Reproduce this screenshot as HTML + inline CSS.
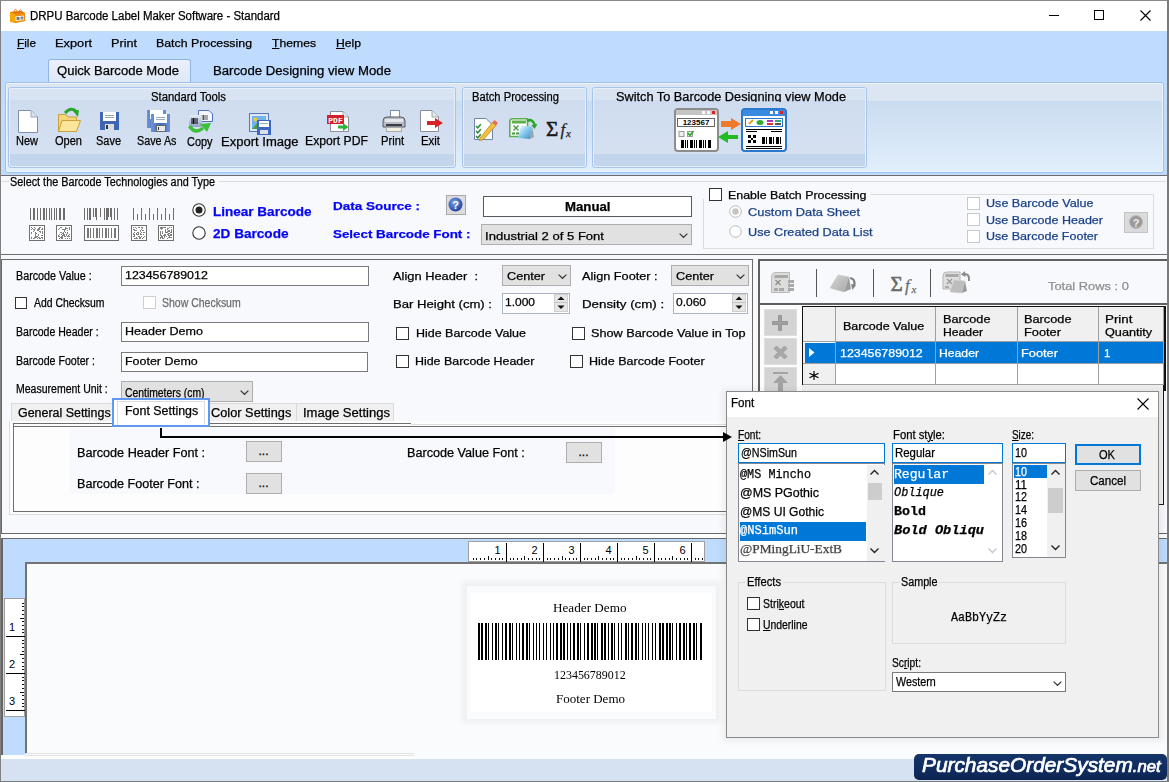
<!DOCTYPE html>
<html><head><meta charset="utf-8">
<style>
*{box-sizing:border-box;margin:0;padding:0}
html,body{width:1169px;height:782px;overflow:hidden;background:#fff;font-family:"Liberation Sans",sans-serif;font-size:12px;color:#000;position:relative}
.a{position:absolute}
.t{position:absolute;white-space:nowrap;line-height:1;-webkit-text-stroke:0.25px currentColor}
svg.a{overflow:visible}
</style></head><body>
<div class="a" style="left:0px;top:0px;width:1169px;height:782px;background:#f8f9fc;"></div>
<div class="a" style="left:0px;top:0px;width:1169px;height:31px;background:#ffffff;"></div>
<svg class="a" style="left:9px;top:7px;" width="17" height="17" viewBox="0 0 17 17"><path d="M1 5 L12 4 L16 6 L16 14 L6 16 L1 15 Z" fill="#f7a800"/><path d="M1 5 L12 4 L16 6 L6 7 Z" fill="#e07010"/><path d="M6 7 L16 6 L16 14 L6 16 Z" fill="#f28a10"/><path d="M6.5 9.5 L15 8.5 L15 13 L6.5 14 Z" fill="#fff"/><rect x="7.5" y="10" width="3" height="3" fill="#777"/><rect x="11.5" y="9.5" width="3" height="3" fill="#888"/><path d="M5 5 Q6 0 8 4 M10 4 Q12 1 13 5" stroke="#f08030" fill="none" stroke-width="1"/></svg>
<div class="t" style="left:30.0px;top:9.6px;font-size:12px;transform:scaleX(0.9561);transform-origin:0 0;">DRPU Barcode Label Maker Software - Standard</div>
<div class="a" style="left:1049px;top:15px;width:10px;height:1px;background:#000;"></div>
<div class="a" style="left:1094px;top:10px;width:10px;height:10px;border:1px solid #000;"></div>
<svg class="a" style="left:1140px;top:10px;" width="11" height="11" viewBox="0 0 11 11"><path d="M0.5 0.5 L10.5 10.5 M10.5 0.5 L0.5 10.5" stroke="#000" stroke-width="1.1"/></svg>
<div class="a" style="left:0px;top:31px;width:1169px;height:144px;background:#bfdbfd;"></div>
<div class="t" style="left:17.0px;top:37.5px;font-size:11px;color:#000;transform:scaleX(1.0704);transform-origin:0 0;"><u>F</u>ile</div>
<div class="t" style="left:55.0px;top:37.5px;font-size:11px;color:#000;transform:scaleX(1.1636);transform-origin:0 0;">Export</div>
<div class="t" style="left:111.0px;top:37.5px;font-size:11px;color:#000;transform:scaleX(1.1492);transform-origin:0 0;">Print</div>
<div class="t" style="left:156.0px;top:37.5px;font-size:11px;color:#000;transform:scaleX(1.1214);transform-origin:0 0;">Batch Processing</div>
<div class="t" style="left:272.0px;top:37.5px;font-size:11px;color:#000;transform:scaleX(1.1065);transform-origin:0 0;"><u>T</u>hemes</div>
<div class="t" style="left:336.0px;top:37.5px;font-size:11px;color:#000;transform:scaleX(1.1042);transform-origin:0 0;"><u>H</u>elp</div>
<div class="a" style="left:48px;top:59px;width:143px;height:23px;background:linear-gradient(#eceffb,#e4ecf8 50%,#dfe8f6);border:1px solid #8fb4e8;border-bottom:none;border-radius:3px 3px 0 0;"></div>
<div class="t" style="left:56.5px;top:64.6px;font-size:12px;transform:scaleX(1.0887);transform-origin:0 0;">Quick Barcode Mode</div>
<div class="t" style="left:213.0px;top:64.6px;font-size:12px;transform:scaleX(1.0981);transform-origin:0 0;">Barcode Designing view Mode</div>
<div class="a" style="left:5px;top:82px;width:1159px;height:91px;background:linear-gradient(#dce6f2 0,#dce6f2 18px,#cadcf0 18px,#e2effc 100%);border:1px solid #9fc0ea;border-radius:3px;"></div>
<div class="a" style="left:6px;top:83px;width:1157px;height:89px;border:1px solid #eef4fb;border-radius:2px;"></div>
<div class="a" style="left:8px;top:87px;width:448px;height:81px;background:linear-gradient(#d9e4f3 0,#d9e4f3 12px,#cfdcef 12px,#d5e1f1 66px,#c3d5ed 66px,#c3d5ed 100%);border:1px solid #a7c4ea;border-radius:3px;"></div>
<div class="a" style="left:9px;top:88px;width:446px;height:79px;border:1px solid #e6eef8;border-radius:2px;"></div>
<div class="t" style="left:151.0px;top:90.8px;font-size:12px;transform:scaleX(0.9393);transform-origin:0 0;">Standard Tools</div>
<div class="a" style="left:462px;top:87px;width:125px;height:81px;background:linear-gradient(#d9e4f3 0,#d9e4f3 12px,#cfdcef 12px,#d5e1f1 66px,#c3d5ed 66px,#c3d5ed 100%);border:1px solid #a7c4ea;border-radius:3px;"></div>
<div class="a" style="left:463px;top:88px;width:123px;height:79px;border:1px solid #e6eef8;border-radius:2px;"></div>
<div class="t" style="left:472.0px;top:90.8px;font-size:12px;transform:scaleX(0.9316);transform-origin:0 0;">Batch Processing</div>
<div class="a" style="left:592px;top:87px;width:275px;height:81px;background:linear-gradient(#d9e4f3 0,#d9e4f3 12px,#cfdcef 12px,#d5e1f1 66px,#c3d5ed 66px,#c3d5ed 100%);border:1px solid #a7c4ea;border-radius:3px;"></div>
<div class="a" style="left:593px;top:88px;width:273px;height:79px;border:1px solid #e6eef8;border-radius:2px;"></div>
<div class="t" style="left:616.0px;top:90.8px;font-size:12px;transform:scaleX(1.0620);transform-origin:0 0;"><span style="display:block;height:11px;overflow:hidden">Switch To Barcode Designing view Mode</span></div>
<svg class="a" style="left:18px;top:110px;" width="20" height="23" viewBox="0 0 20 23"><path d="M0.5 0.5 H13 L19.5 7 V22.5 H0.5 Z" fill="#fff" stroke="#7f8fb0"/><path d="M13 0.5 V7 H19.5" fill="#dde3ee" stroke="#9aa6c0"/></svg>
<div class="t" style="left:16.0px;top:134.5px;font-size:12px;transform:scaleX(0.9161);transform-origin:0 0;">New</div>
<svg class="a" style="left:58px;top:108px;" width="23" height="25" viewBox="0 0 23 25"><path d="M0.5 6.5 H8 L10 9 H18.5 V23.5 H0.5 Z" fill="#f5d77a" stroke="#c9a03a"/><path d="M0.5 23.5 L4 12.5 H22.5 L18.5 23.5 Z" fill="#fbe59a" stroke="#c9a03a"/><path d="M7 5 Q13 -2 19 4" fill="none" stroke="#2aa52a" stroke-width="3"/><path d="M15 3 L21 2 L20 9 Z" fill="#2aa52a"/></svg>
<div class="t" style="left:54.5px;top:134.5px;font-size:12px;transform:scaleX(0.9196);transform-origin:0 0;">Open</div>
<svg class="a" style="left:100px;top:112px;" width="19" height="18" viewBox="0 0 19 18"><rect x="0" y="0" width="19" height="18" fill="#3f66b5"/><rect x="3" y="0" width="13" height="9" fill="#fff"/><rect x="5" y="3" width="9" height="1" fill="#9aa"/><rect x="5" y="5" width="9" height="1" fill="#9aa"/><rect x="5" y="12" width="9" height="6" fill="#ddd"/><rect x="6" y="13" width="2" height="4" fill="#333"/></svg>
<div class="t" style="left:96.0px;top:134.5px;font-size:12px;transform:scaleX(0.9138);transform-origin:0 0;">Save</div>
<svg class="a" style="left:147px;top:110px;" width="24" height="22" viewBox="0 0 24 22"><defs><linearGradient id="fg" x1="0" x2="1"><stop offset="0" stop-color="#6f95d8"/><stop offset="0.5" stop-color="#3d68bf"/><stop offset="1" stop-color="#6f95d8"/></linearGradient></defs><rect x="0" y="0" width="19" height="18" fill="url(#fg)"/><rect x="3" y="0" width="13" height="9" fill="#fff"/><rect x="4" y="4" width="19" height="18" fill="url(#fg)"/><rect x="7" y="4" width="13" height="9" fill="#fff"/><rect x="9" y="7" width="9" height="1" fill="#9ab"/><rect x="9" y="9" width="9" height="1" fill="#9ab"/><rect x="9.5" y="15.5" width="9" height="6" fill="#e8e8e8" stroke="#666"/><rect x="11" y="17" width="1" height="3" fill="#333"/></svg>
<div class="t" style="left:136.5px;top:134.5px;font-size:12px;transform:scaleX(0.8971);transform-origin:0 0;">Save As</div>
<svg class="a" style="left:188px;top:109px;" width="26" height="25" viewBox="0 0 26 25"><defs><linearGradient id="cg" x1="0" y1="0" x2="0" y2="1"><stop offset="0" stop-color="#e8eef8"/><stop offset="1" stop-color="#8fa3c4"/></linearGradient></defs><path d="M10.5 1.5 H21 L24.5 5 V12.5 H10.5 Z" fill="#f4f8fd" stroke="#4f70c0"/><path d="M14 6 v5 M15.5 6 v5 M17 6 v5 M19 6 v5" stroke="#555"/><rect x="1" y="6" width="13" height="12" rx="2" fill="url(#cg)"/><path d="M4 9 v6 M5.5 9 v6 M7 9 v6 M9 9 v6" stroke="#111" stroke-width="1.1"/><path d="M1.5 17 Q7 26 15 19" fill="none" stroke="#3cc03c" stroke-width="3.5"/><path d="M12 15 L23 14 L19 23 Z" fill="#3cc03c"/></svg>
<div class="t" style="left:187.0px;top:135.8px;font-size:12px;transform:scaleX(0.9102);transform-origin:0 0;">Copy</div>
<svg class="a" style="left:249px;top:113px;" width="23" height="22" viewBox="0 0 23 22"><rect x="0.5" y="0.5" width="19" height="18" fill="#dde6f3" stroke="#5a78b0"/><rect x="3" y="3" width="14" height="13" fill="#6fb4ea"/><circle cx="6.5" cy="6.5" r="2" fill="#f5c542"/><path d="M3 16 L8 10 L11 13 L14 9 L17 13 V16Z" fill="#4aa04a"/><rect x="8" y="7" width="14" height="15" fill="#3d68bf"/><rect x="10" y="8" width="10" height="6" fill="#fff"/><rect x="11" y="10" width="8" height="1" fill="#9ab"/><rect x="11" y="17" width="8" height="4" fill="#dde"/></svg>
<div class="t" style="left:221.0px;top:135.8px;font-size:12px;transform:scaleX(1.0858);transform-origin:0 0;">Export Image</div>
<svg class="a" style="left:326px;top:110px;" width="24" height="23" viewBox="0 0 24 23"><path d="M4.5 1.5 H17 L22.5 7 V21.5 H4.5 Z" fill="#fff" stroke="#8a8f99"/><path d="M17 1.5 V7 H22.5" fill="#e4e6ea" stroke="#9aa"/><rect x="1" y="5" width="17" height="9" fill="#d3202a"/><text x="9.5" y="12.8" font-size="8" font-weight="bold" fill="#fff" text-anchor="middle" font-family="Liberation Mono">PDF</text><path d="M12 15.5 H17 V13 L22.5 17 L17 21 V18.5 H12 Z" fill="#2bb53a"/></svg>
<div class="t" style="left:305.0px;top:135.3px;font-size:12px;transform:scaleX(1.0159);transform-origin:0 0;">Export PDF</div>
<svg class="a" style="left:382px;top:110px;" width="24" height="22" viewBox="0 0 24 22"><rect x="8.5" y="0.5" width="9" height="9" fill="#fff" stroke="#7f8fb0"/><path d="M1 11 Q1 7 5 7 H19 Q23 7 23 11 V17 H1 Z" fill="#b8bcc4" stroke="#555a63"/><rect x="3" y="9" width="18" height="3" fill="#e4e7ec"/><rect x="4" y="14" width="16" height="2" fill="#3a3d44"/><rect x="4.5" y="17.5" width="15" height="4" fill="#f2f0e0" stroke="#aaa"/></svg>
<div class="t" style="left:381.0px;top:135.3px;font-size:12px;transform:scaleX(0.9316);transform-origin:0 0;">Print</div>
<svg class="a" style="left:420px;top:110px;" width="24" height="22" viewBox="0 0 24 22"><path d="M0.5 0.5 H12 L18.5 7 V21.5 H0.5 Z" fill="#fff" stroke="#8a8f99"/><path d="M12 0.5 V7 H18.5" fill="#e4e6ea" stroke="#9aa"/><path d="M7 11 H15 V8 L23 13 L15 18 V15 H7 Z" fill="#d8232a"/></svg>
<div class="t" style="left:420.8px;top:135.3px;font-size:12px;transform:scaleX(0.9493);transform-origin:0 0;">Exit</div>
<svg class="a" style="left:474px;top:118px;" width="24" height="23" viewBox="0 0 24 23"><path d="M0.5 0.5 H12 L18.5 7 V21.5 H0.5 Z" fill="#fff" stroke="#7284aa"/><path d="M2 8 l1.8 1.8 l3 -3.5 M2 13 l1.8 1.8 l3 -3.5 M2 18 l1.8 1.8 l3 -3.5" stroke="#2e8a2e" stroke-width="1.5" fill="none"/><path d="M6 20 L18.5 4.5 L22 7.5 L9.5 21.5 L5.5 22.5 Z" fill="#f2c040" stroke="#b07a18" stroke-width="0.7"/><path d="M18.5 4.5 L20.5 2 L24 5 L22 7.5Z" fill="#e86a5a"/></svg>
<svg class="a" style="left:509px;top:118px;" width="29" height="23" viewBox="0 0 29 23"><defs><linearGradient id="bn" x1="0" y1="0" x2="1" y2="1"><stop offset="0" stop-color="#ffffff"/><stop offset="0.45" stop-color="#8fd0f0"/><stop offset="1" stop-color="#3a8ac0"/></linearGradient></defs><path d="M0.8 4 Q0.8 0.8 4 0.8 H18.5 V18.5 H0.8 Z" fill="#fff" stroke="#5cb04c" stroke-width="1.6"/><rect x="3" y="2.5" width="14" height="3" fill="#5cb04c"/><path d="M4.5 7.5 l5 5 M9.5 7.5 l-5 5" stroke="#3f9a3f" stroke-width="1.3"/><rect x="3" y="14.5" width="3" height="2" fill="#3f9a3f"/><rect x="7" y="14.5" width="3" height="2" fill="#3f9a3f"/><path d="M9 20 L12 7.5 L23 8.5 L21 21 Z" fill="url(#bn)"/><path d="M21 21 L23 8.5 L25 19 Z" fill="#9aa4ac"/><path d="M18 3 Q24 0 26 8" fill="none" stroke="#2aa52a" stroke-width="2.6"/><path d="M22.5 7 L28.5 6 L25.5 11 Z" fill="#2aa52a"/></svg>
<div class="t" style="left:546.0px;top:119.2px;font-size:21px;color:#1a1a1a;font-family:'Liberation Serif',serif;-webkit-text-stroke:0.6px #1a1a1a;">&Sigma;</div>
<div class="t" style="left:560.5px;top:121.4px;font-size:17px;color:#1a1a1a;font-family:'Liberation Serif',serif;"><i>f</i></div>
<div class="t" style="left:566.0px;top:128.3px;font-size:11px;color:#1a1a1a;font-family:'Liberation Serif',serif;"><i>x</i></div>
<svg class="a" style="left:674px;top:108px;" width="45" height="44" viewBox="0 0 45 44"><rect x="1" y="1" width="43" height="42" rx="3" fill="#fff" stroke="#8c8c8c" stroke-width="2"/><rect x="2" y="2" width="41" height="5" fill="#c4c4c4"/><rect x="28" y="3" width="3" height="3" fill="#fff"/><rect x="33" y="3" width="3" height="3" fill="#fff"/><rect x="38" y="3" width="3" height="3" fill="#d22"/><rect x="3.5" y="10.5" width="37" height="8" fill="#fff" stroke="#666"/><text x="22" y="17.3" font-size="8" font-weight="bold" text-anchor="middle" font-family="Liberation Sans">123567</text><rect x="5" y="23.5" width="5" height="5" fill="#eee" stroke="#999"/><rect x="13.5" y="23.5" width="5" height="5" fill="#eee" stroke="#999"/><path d="M14 25 l2 2.5 l3.5 -4.5" stroke="#2a2" stroke-width="1.5" fill="none"/><rect x="7" y="32" width="2" height="8" fill="#000"/><rect x="9" y="32" width="1" height="8" fill="#000"/><rect x="11" y="32" width="1" height="8" fill="#000"/><rect x="13" y="32" width="1" height="8" fill="#000"/><rect x="16" y="32" width="2" height="8" fill="#000"/><rect x="18" y="32" width="1" height="8" fill="#000"/><rect x="20" y="32" width="1" height="8" fill="#000"/><rect x="22" y="32" width="1" height="8" fill="#000"/><rect x="25" y="32" width="2" height="8" fill="#000"/><rect x="27" y="32" width="1" height="8" fill="#000"/><rect x="29" y="32" width="1" height="8" fill="#000"/><rect x="31" y="32" width="1" height="8" fill="#000"/><rect x="34" y="32" width="2" height="8" fill="#000"/><rect x="36" y="32" width="1" height="8" fill="#000"/></svg>
<svg class="a" style="left:718px;top:118px;" width="24" height="26" viewBox="0 0 24 26"><path d="M3 3 H13 V0 L23 6 L13 12 V9 H3 Z" fill="#ee7a2a"/><path d="M20 17 H10 V13 L0 19 L10 25 V21 H20 Z" fill="#22bb22"/></svg>
<svg class="a" style="left:741px;top:108px;" width="46" height="44" viewBox="0 0 46 44"><rect x="1" y="1" width="44" height="42" rx="3" fill="#fff" stroke="#2a78d0" stroke-width="2"/><rect x="2" y="2" width="42" height="6" fill="#3a8ae0"/><rect x="29" y="3" width="3" height="3" fill="#fff"/><rect x="34" y="3" width="3" height="3" fill="#fff"/><rect x="39" y="3" width="3" height="3" fill="#d22"/><rect x="4.5" y="10.5" width="37" height="8" fill="#fff" stroke="#2a78d0"/><path d="M8 16 l4 -4" stroke="#e0a020" stroke-width="2"/><ellipse cx="19" cy="14.5" rx="3.5" ry="2.5" fill="#3a3"/><rect x="26" y="12" width="6" height="2" fill="#a3c"/><rect x="26" y="15" width="6" height="2" fill="#d33"/><rect x="34" y="12" width="6" height="2" fill="#3a7"/><rect x="34" y="15" width="6" height="2" fill="#555"/><rect x="5" y="21" width="36" height="1" fill="#000"/><rect x="5" y="23" width="11" height="1" fill="#000"/><rect x="30" y="23" width="11" height="1" fill="#000"/><rect x="7" y="27" width="3" height="3" fill="#000"/><rect x="12" y="27" width="3" height="3" fill="#000"/><rect x="7" y="32" width="3" height="3" fill="#000"/><rect x="12" y="32" width="3" height="3" fill="#000"/><rect x="10" y="30" width="2" height="2" fill="#000"/><rect x="21" y="29" width="2" height="7" fill="#000"/><rect x="23" y="29" width="1" height="7" fill="#000"/><rect x="25" y="29" width="1" height="7" fill="#000"/><rect x="28" y="29" width="2" height="7" fill="#000"/><rect x="30" y="29" width="1" height="7" fill="#000"/><rect x="32" y="29" width="1" height="7" fill="#000"/><rect x="35" y="29" width="2" height="7" fill="#000"/><rect x="37" y="29" width="1" height="7" fill="#000"/><rect x="39" y="29" width="1" height="7" fill="#000"/><rect x="5" y="38" width="36" height="1" fill="#000"/><rect x="5" y="40" width="36" height="1" fill="#000"/></svg>
<div class="a" style="left:0px;top:175px;width:1169px;height:1px;background:#6d6d6d;"></div>
<div class="a" style="left:0px;top:254px;width:1169px;height:1px;background:#6d6d6d;"></div>
<div class="a" style="left:2px;top:181px;width:1164px;height:1px;background:#dcdcdc;"></div>
<div class="a" style="left:9px;top:176px;width:210px;height:11px;background:#f8f9fc;"></div>
<div class="t" style="left:10.0px;top:176.0px;font-size:12px;transform:scaleX(0.9028);transform-origin:0 0;">Select the Barcode Technologies and Type</div>
<svg class="a" style="left:30px;top:208px;" width="37" height="12" viewBox="0 0 37 12"><rect x="0" y="0" width="1" height="12" fill="#6d6d6d"/><rect x="3" y="0" width="2" height="12" fill="#6d6d6d"/><rect x="7" y="0" width="1" height="12" fill="#6d6d6d"/><rect x="10" y="0" width="1" height="12" fill="#6d6d6d"/><rect x="13" y="0" width="2" height="12" fill="#6d6d6d"/><rect x="16" y="0" width="1" height="12" fill="#6d6d6d"/><rect x="19" y="0" width="1" height="12" fill="#6d6d6d"/><rect x="21" y="0" width="1" height="12" fill="#6d6d6d"/><rect x="24" y="0" width="1" height="12" fill="#6d6d6d"/><rect x="26" y="0" width="1" height="12" fill="#6d6d6d"/><rect x="29" y="0" width="2" height="12" fill="#6d6d6d"/><rect x="33" y="0" width="2" height="12" fill="#6d6d6d"/></svg>
<svg class="a" style="left:84px;top:208px;" width="34" height="12" viewBox="0 0 34 12"><path d="M0.5 0v12M3.5 0v12M6.5 0v12M9.5 0v9M12.5 0v12M16.5 0v9M20.5 0v12M24.5 0v9M27.5 0v12M30.5 0v12M33.5 0v12" stroke="#6d6d6d" stroke-width="1"/><rect x="5" y="0" width="2" height="12" fill="#6d6d6d"/><rect x="11" y="0" width="2" height="9" fill="#6d6d6d"/><rect x="22" y="0" width="2" height="12" fill="#6d6d6d"/><rect x="26" y="0" width="2" height="9" fill="#6d6d6d"/></svg>
<svg class="a" style="left:133px;top:208px;" width="42" height="12" viewBox="0 0 42 12"><rect x="0" y="0" width="1" height="12" fill="#6d6d6d"/><rect x="4" y="6" width="1" height="6" fill="#6d6d6d"/><rect x="8" y="0" width="1" height="12" fill="#6d6d6d"/><rect x="12" y="6" width="1" height="6" fill="#6d6d6d"/><rect x="16" y="0" width="1" height="12" fill="#6d6d6d"/><rect x="20" y="6" width="1" height="6" fill="#6d6d6d"/><rect x="24" y="0" width="1" height="12" fill="#6d6d6d"/><rect x="28" y="6" width="1" height="6" fill="#6d6d6d"/><rect x="32" y="0" width="1" height="12" fill="#6d6d6d"/><rect x="36" y="6" width="1" height="6" fill="#6d6d6d"/><rect x="40" y="0" width="1" height="12" fill="#6d6d6d"/></svg>
<svg class="a" style="left:29px;top:225px;" width="16" height="16" viewBox="0 0 16 16"><rect x="0.5" y="0.5" width="15" height="15" fill="#fff" stroke="#707070"/><rect x="2" y="2" width="1" height="1" fill="#808080"/><rect x="5" y="2" width="1" height="1" fill="#808080"/><rect x="10" y="2" width="1" height="1" fill="#808080"/><rect x="11" y="2" width="1" height="1" fill="#808080"/><rect x="3" y="3" width="1" height="1" fill="#808080"/><rect x="6" y="3" width="1" height="1" fill="#808080"/><rect x="9" y="3" width="1" height="1" fill="#808080"/><rect x="10" y="3" width="1" height="1" fill="#808080"/><rect x="13" y="3" width="1" height="1" fill="#808080"/><rect x="2" y="4" width="1" height="1" fill="#808080"/><rect x="4" y="4" width="1" height="1" fill="#808080"/><rect x="5" y="4" width="1" height="1" fill="#808080"/><rect x="8" y="4" width="1" height="1" fill="#808080"/><rect x="9" y="4" width="1" height="1" fill="#808080"/><rect x="10" y="4" width="1" height="1" fill="#808080"/><rect x="12" y="4" width="1" height="1" fill="#808080"/><rect x="13" y="4" width="1" height="1" fill="#808080"/><rect x="5" y="5" width="1" height="1" fill="#808080"/><rect x="8" y="5" width="1" height="1" fill="#808080"/><rect x="9" y="5" width="1" height="1" fill="#808080"/><rect x="4" y="6" width="1" height="1" fill="#808080"/><rect x="10" y="6" width="1" height="1" fill="#808080"/><rect x="11" y="6" width="1" height="1" fill="#808080"/><rect x="13" y="6" width="1" height="1" fill="#808080"/><rect x="2" y="7" width="1" height="1" fill="#808080"/><rect x="6" y="7" width="1" height="1" fill="#808080"/><rect x="11" y="7" width="1" height="1" fill="#808080"/><rect x="13" y="7" width="1" height="1" fill="#808080"/><rect x="2" y="8" width="1" height="1" fill="#808080"/><rect x="6" y="8" width="1" height="1" fill="#808080"/><rect x="7" y="8" width="1" height="1" fill="#808080"/><rect x="13" y="8" width="1" height="1" fill="#808080"/><rect x="6" y="9" width="1" height="1" fill="#808080"/><rect x="9" y="9" width="1" height="1" fill="#808080"/><rect x="6" y="10" width="1" height="1" fill="#808080"/><rect x="9" y="10" width="1" height="1" fill="#808080"/><rect x="12" y="10" width="1" height="1" fill="#808080"/><rect x="13" y="10" width="1" height="1" fill="#808080"/><rect x="6" y="11" width="1" height="1" fill="#808080"/><rect x="7" y="11" width="1" height="1" fill="#808080"/><rect x="8" y="11" width="1" height="1" fill="#808080"/><rect x="2" y="12" width="1" height="1" fill="#808080"/><rect x="5" y="12" width="1" height="1" fill="#808080"/><rect x="6" y="12" width="1" height="1" fill="#808080"/><rect x="7" y="12" width="1" height="1" fill="#808080"/><rect x="9" y="12" width="1" height="1" fill="#808080"/><rect x="10" y="12" width="1" height="1" fill="#808080"/><rect x="12" y="12" width="1" height="1" fill="#808080"/><rect x="13" y="12" width="1" height="1" fill="#808080"/><rect x="2" y="13" width="1" height="1" fill="#808080"/><rect x="4" y="13" width="1" height="1" fill="#808080"/><rect x="5" y="13" width="1" height="1" fill="#808080"/><rect x="8" y="13" width="1" height="1" fill="#808080"/><rect x="10" y="13" width="1" height="1" fill="#808080"/><rect x="11" y="13" width="1" height="1" fill="#808080"/><rect x="13" y="13" width="1" height="1" fill="#808080"/></svg>
<svg class="a" style="left:56px;top:225px;" width="16" height="16" viewBox="0 0 16 16"><rect x="0.5" y="0.5" width="15" height="15" fill="#fff" stroke="#707070"/><rect x="4" y="2" width="1" height="1" fill="#808080"/><rect x="5" y="2" width="1" height="1" fill="#808080"/><rect x="9" y="2" width="1" height="1" fill="#808080"/><rect x="13" y="2" width="1" height="1" fill="#808080"/><rect x="3" y="3" width="1" height="1" fill="#808080"/><rect x="9" y="3" width="1" height="1" fill="#808080"/><rect x="10" y="3" width="1" height="1" fill="#808080"/><rect x="11" y="3" width="1" height="1" fill="#808080"/><rect x="13" y="3" width="1" height="1" fill="#808080"/><rect x="2" y="4" width="1" height="1" fill="#808080"/><rect x="6" y="4" width="1" height="1" fill="#808080"/><rect x="7" y="4" width="1" height="1" fill="#808080"/><rect x="8" y="4" width="1" height="1" fill="#808080"/><rect x="9" y="4" width="1" height="1" fill="#808080"/><rect x="13" y="4" width="1" height="1" fill="#808080"/><rect x="8" y="5" width="1" height="1" fill="#808080"/><rect x="11" y="5" width="1" height="1" fill="#808080"/><rect x="8" y="6" width="1" height="1" fill="#808080"/><rect x="4" y="7" width="1" height="1" fill="#808080"/><rect x="5" y="7" width="1" height="1" fill="#808080"/><rect x="7" y="7" width="1" height="1" fill="#808080"/><rect x="9" y="7" width="1" height="1" fill="#808080"/><rect x="11" y="7" width="1" height="1" fill="#808080"/><rect x="6" y="8" width="1" height="1" fill="#808080"/><rect x="7" y="8" width="1" height="1" fill="#808080"/><rect x="11" y="8" width="1" height="1" fill="#808080"/><rect x="3" y="9" width="1" height="1" fill="#808080"/><rect x="5" y="9" width="1" height="1" fill="#808080"/><rect x="7" y="9" width="1" height="1" fill="#808080"/><rect x="8" y="9" width="1" height="1" fill="#808080"/><rect x="10" y="9" width="1" height="1" fill="#808080"/><rect x="13" y="9" width="1" height="1" fill="#808080"/><rect x="2" y="10" width="1" height="1" fill="#808080"/><rect x="6" y="10" width="1" height="1" fill="#808080"/><rect x="7" y="10" width="1" height="1" fill="#808080"/><rect x="8" y="10" width="1" height="1" fill="#808080"/><rect x="10" y="10" width="1" height="1" fill="#808080"/><rect x="12" y="10" width="1" height="1" fill="#808080"/><rect x="2" y="11" width="1" height="1" fill="#808080"/><rect x="3" y="11" width="1" height="1" fill="#808080"/><rect x="5" y="11" width="1" height="1" fill="#808080"/><rect x="6" y="11" width="1" height="1" fill="#808080"/><rect x="8" y="11" width="1" height="1" fill="#808080"/><rect x="9" y="11" width="1" height="1" fill="#808080"/><rect x="11" y="11" width="1" height="1" fill="#808080"/><rect x="12" y="11" width="1" height="1" fill="#808080"/><rect x="13" y="11" width="1" height="1" fill="#808080"/><rect x="4" y="12" width="1" height="1" fill="#808080"/><rect x="5" y="12" width="1" height="1" fill="#808080"/><rect x="6" y="12" width="1" height="1" fill="#808080"/><rect x="3" y="13" width="1" height="1" fill="#808080"/><rect x="5" y="13" width="1" height="1" fill="#808080"/><rect x="6" y="13" width="1" height="1" fill="#808080"/><rect x="9" y="13" width="1" height="1" fill="#808080"/><rect x="11" y="13" width="1" height="1" fill="#808080"/><rect x="13" y="13" width="1" height="1" fill="#808080"/></svg>
<svg class="a" style="left:84px;top:225px;" width="35" height="16" viewBox="0 0 35 16"><rect x="0.5" y="0.5" width="34" height="15" fill="#fff" stroke="#6d6d6d"/><rect x="3" y="3" width="2" height="10" fill="#777"/><rect x="6" y="3" width="1" height="10" fill="#777"/><rect x="9" y="3" width="1" height="10" fill="#777"/><rect x="12" y="3" width="2" height="10" fill="#777"/><rect x="15" y="3" width="1" height="10" fill="#777"/><rect x="18" y="3" width="1" height="10" fill="#777"/><rect x="21" y="3" width="2" height="10" fill="#777"/><rect x="24" y="3" width="1" height="10" fill="#777"/><rect x="27" y="3" width="1" height="10" fill="#777"/><rect x="30" y="3" width="2" height="10" fill="#777"/></svg>
<svg class="a" style="left:131px;top:225px;" width="16" height="16" viewBox="0 0 16 16"><rect x="0.5" y="0.5" width="15" height="15" fill="#fff" stroke="#707070"/><rect x="2" y="2" width="1" height="1" fill="#808080"/><rect x="4" y="2" width="1" height="1" fill="#808080"/><rect x="7" y="2" width="1" height="1" fill="#808080"/><rect x="8" y="2" width="1" height="1" fill="#808080"/><rect x="10" y="2" width="1" height="1" fill="#808080"/><rect x="11" y="2" width="1" height="1" fill="#808080"/><rect x="5" y="3" width="1" height="1" fill="#808080"/><rect x="11" y="3" width="1" height="1" fill="#808080"/><rect x="2" y="4" width="1" height="1" fill="#808080"/><rect x="3" y="4" width="1" height="1" fill="#808080"/><rect x="10" y="4" width="1" height="1" fill="#808080"/><rect x="3" y="5" width="1" height="1" fill="#808080"/><rect x="4" y="5" width="1" height="1" fill="#808080"/><rect x="5" y="5" width="1" height="1" fill="#808080"/><rect x="9" y="5" width="1" height="1" fill="#808080"/><rect x="11" y="5" width="1" height="1" fill="#808080"/><rect x="12" y="5" width="1" height="1" fill="#808080"/><rect x="9" y="6" width="1" height="1" fill="#808080"/><rect x="3" y="7" width="1" height="1" fill="#808080"/><rect x="6" y="7" width="1" height="1" fill="#808080"/><rect x="7" y="7" width="1" height="1" fill="#808080"/><rect x="10" y="7" width="1" height="1" fill="#808080"/><rect x="12" y="7" width="1" height="1" fill="#808080"/><rect x="13" y="7" width="1" height="1" fill="#808080"/><rect x="2" y="8" width="1" height="1" fill="#808080"/><rect x="5" y="8" width="1" height="1" fill="#808080"/><rect x="7" y="8" width="1" height="1" fill="#808080"/><rect x="9" y="8" width="1" height="1" fill="#808080"/><rect x="2" y="9" width="1" height="1" fill="#808080"/><rect x="3" y="9" width="1" height="1" fill="#808080"/><rect x="5" y="9" width="1" height="1" fill="#808080"/><rect x="6" y="9" width="1" height="1" fill="#808080"/><rect x="7" y="9" width="1" height="1" fill="#808080"/><rect x="9" y="9" width="1" height="1" fill="#808080"/><rect x="10" y="9" width="1" height="1" fill="#808080"/><rect x="12" y="9" width="1" height="1" fill="#808080"/><rect x="3" y="10" width="1" height="1" fill="#808080"/><rect x="2" y="11" width="1" height="1" fill="#808080"/><rect x="3" y="11" width="1" height="1" fill="#808080"/><rect x="7" y="11" width="1" height="1" fill="#808080"/><rect x="8" y="11" width="1" height="1" fill="#808080"/><rect x="10" y="11" width="1" height="1" fill="#808080"/><rect x="13" y="11" width="1" height="1" fill="#808080"/><rect x="5" y="12" width="1" height="1" fill="#808080"/><rect x="8" y="12" width="1" height="1" fill="#808080"/><rect x="9" y="12" width="1" height="1" fill="#808080"/><rect x="12" y="12" width="1" height="1" fill="#808080"/><rect x="3" y="13" width="1" height="1" fill="#808080"/><rect x="4" y="13" width="1" height="1" fill="#808080"/><rect x="5" y="13" width="1" height="1" fill="#808080"/><rect x="6" y="13" width="1" height="1" fill="#808080"/><rect x="8" y="13" width="1" height="1" fill="#808080"/><rect x="9" y="13" width="1" height="1" fill="#808080"/><rect x="11" y="13" width="1" height="1" fill="#808080"/></svg>
<svg class="a" style="left:158px;top:225px;" width="16" height="16" viewBox="0 0 16 16"><rect x="0.5" y="0.5" width="15" height="15" fill="#fff" stroke="#707070"/><rect x="2" y="2" width="1" height="1" fill="#808080"/><rect x="3" y="2" width="1" height="1" fill="#808080"/><rect x="4" y="2" width="1" height="1" fill="#808080"/><rect x="5" y="2" width="1" height="1" fill="#808080"/><rect x="6" y="2" width="1" height="1" fill="#808080"/><rect x="7" y="2" width="1" height="1" fill="#808080"/><rect x="11" y="2" width="1" height="1" fill="#808080"/><rect x="13" y="2" width="1" height="1" fill="#808080"/><rect x="2" y="3" width="1" height="1" fill="#808080"/><rect x="3" y="3" width="1" height="1" fill="#808080"/><rect x="4" y="3" width="1" height="1" fill="#808080"/><rect x="9" y="3" width="1" height="1" fill="#808080"/><rect x="10" y="3" width="1" height="1" fill="#808080"/><rect x="3" y="4" width="1" height="1" fill="#808080"/><rect x="7" y="4" width="1" height="1" fill="#808080"/><rect x="9" y="4" width="1" height="1" fill="#808080"/><rect x="13" y="4" width="1" height="1" fill="#808080"/><rect x="7" y="5" width="1" height="1" fill="#808080"/><rect x="10" y="5" width="1" height="1" fill="#808080"/><rect x="11" y="5" width="1" height="1" fill="#808080"/><rect x="13" y="5" width="1" height="1" fill="#808080"/><rect x="2" y="6" width="1" height="1" fill="#808080"/><rect x="4" y="6" width="1" height="1" fill="#808080"/><rect x="7" y="6" width="1" height="1" fill="#808080"/><rect x="9" y="6" width="1" height="1" fill="#808080"/><rect x="10" y="6" width="1" height="1" fill="#808080"/><rect x="11" y="6" width="1" height="1" fill="#808080"/><rect x="13" y="6" width="1" height="1" fill="#808080"/><rect x="2" y="7" width="1" height="1" fill="#808080"/><rect x="4" y="7" width="1" height="1" fill="#808080"/><rect x="7" y="7" width="1" height="1" fill="#808080"/><rect x="8" y="7" width="1" height="1" fill="#808080"/><rect x="9" y="7" width="1" height="1" fill="#808080"/><rect x="12" y="7" width="1" height="1" fill="#808080"/><rect x="13" y="7" width="1" height="1" fill="#808080"/><rect x="2" y="8" width="1" height="1" fill="#808080"/><rect x="4" y="8" width="1" height="1" fill="#808080"/><rect x="10" y="8" width="1" height="1" fill="#808080"/><rect x="11" y="8" width="1" height="1" fill="#808080"/><rect x="2" y="9" width="1" height="1" fill="#808080"/><rect x="6" y="9" width="1" height="1" fill="#808080"/><rect x="7" y="9" width="1" height="1" fill="#808080"/><rect x="9" y="9" width="1" height="1" fill="#808080"/><rect x="10" y="9" width="1" height="1" fill="#808080"/><rect x="12" y="9" width="1" height="1" fill="#808080"/><rect x="13" y="9" width="1" height="1" fill="#808080"/><rect x="2" y="10" width="1" height="1" fill="#808080"/><rect x="3" y="10" width="1" height="1" fill="#808080"/><rect x="5" y="10" width="1" height="1" fill="#808080"/><rect x="6" y="10" width="1" height="1" fill="#808080"/><rect x="7" y="10" width="1" height="1" fill="#808080"/><rect x="10" y="10" width="1" height="1" fill="#808080"/><rect x="11" y="10" width="1" height="1" fill="#808080"/><rect x="12" y="10" width="1" height="1" fill="#808080"/><rect x="13" y="10" width="1" height="1" fill="#808080"/><rect x="3" y="11" width="1" height="1" fill="#808080"/><rect x="4" y="11" width="1" height="1" fill="#808080"/><rect x="6" y="11" width="1" height="1" fill="#808080"/><rect x="8" y="11" width="1" height="1" fill="#808080"/><rect x="11" y="11" width="1" height="1" fill="#808080"/><rect x="2" y="12" width="1" height="1" fill="#808080"/><rect x="3" y="12" width="1" height="1" fill="#808080"/><rect x="4" y="12" width="1" height="1" fill="#808080"/><rect x="6" y="12" width="1" height="1" fill="#808080"/><rect x="10" y="12" width="1" height="1" fill="#808080"/><rect x="11" y="12" width="1" height="1" fill="#808080"/><rect x="12" y="12" width="1" height="1" fill="#808080"/><rect x="13" y="12" width="1" height="1" fill="#808080"/><rect x="2" y="13" width="1" height="1" fill="#808080"/><rect x="4" y="13" width="1" height="1" fill="#808080"/><rect x="5" y="13" width="1" height="1" fill="#808080"/><rect x="9" y="13" width="1" height="1" fill="#808080"/></svg>
<svg class="a" style="left:192px;top:203px;" width="15" height="15" viewBox="0 0 15 15"><circle cx="7" cy="7" r="6.2" fill="#fff" stroke="#333" stroke-width="1.1"/><circle cx="7" cy="7" r="3.5" fill="#222"/></svg>
<svg class="a" style="left:192px;top:226px;" width="15" height="15" viewBox="0 0 15 15"><circle cx="7" cy="7" r="6.2" fill="#fff" stroke="#333" stroke-width="1.1"/></svg>
<div class="t" style="left:213.0px;top:204.5px;font-size:13px;color:#0606f5;font-weight:bold;transform:scaleX(1.0406);transform-origin:0 0;">Linear Barcode</div>
<div class="t" style="left:213.0px;top:226.5px;font-size:13px;color:#0606f5;font-weight:bold;transform:scaleX(1.0450);transform-origin:0 0;">2D Barcode</div>
<div class="t" style="left:333.0px;top:201.3px;font-size:11.5px;color:#0606f5;font-weight:bold;transform:scaleX(1.1734);transform-origin:0 0;">Data Source :</div>
<div class="t" style="left:333.0px;top:228.5px;font-size:11.5px;color:#0606f5;font-weight:bold;transform:scaleX(1.1631);transform-origin:0 0;">Select Barcode Font :</div>
<div class="a" style="left:446px;top:195px;width:20px;height:20px;background:#dcdcdc;border:1px solid #a8a8a8;"></div>
<svg class="a" style="left:448px;top:197px;" width="15" height="15" viewBox="0 0 15 15"><defs><radialGradient id="hg" cx="0.4" cy="0.35" r="0.7"><stop offset="0" stop-color="#7aa0e8"/><stop offset="1" stop-color="#1c3e9a"/></radialGradient></defs><circle cx="7.5" cy="7.5" r="7" fill="url(#hg)"/><text x="7.5" y="12" font-size="11" font-weight="bold" fill="#fff" text-anchor="middle" font-family="Liberation Sans">?</text></svg>
<div class="a" style="left:483px;top:196px;width:209px;height:21px;background:#fff;border:1px solid #5a5a5a;"></div>
<div class="t" style="left:564.7px;top:200.8px;font-size:12px;font-weight:bold;transform:scaleX(1.1005);transform-origin:0 0;">Manual</div>
<div class="a" style="left:481px;top:224px;width:211px;height:21px;background:#e1e1e1;border:1px solid #adadad;"></div>
<div class="t" style="left:485.0px;top:230.7px;font-size:11px;transform:scaleX(1.1867);transform-origin:0 0;">Industrial 2 of 5 Font</div>
<svg class="a" style="left:679px;top:233px;" width="9" height="5" viewBox="0 0 9 5"><path d="M0.6 0.6 L4.5 4.3 L8.4 0.6" fill="none" stroke="#3a3a3a" stroke-width="1.2"/></svg>
<div class="a" style="left:703px;top:194px;width:451px;height:55px;border:1px solid #dcdcdc;"></div>
<div class="a" style="left:701px;top:187px;width:170px;height:12px;background:#f8f9fc;"></div>
<div class="a" style="left:709px;top:188px;width:13px;height:13px;background:#fff;border:1px solid #333;"></div>
<div class="t" style="left:728.0px;top:190.0px;font-size:11px;transform:scaleX(1.1267);transform-origin:0 0;">Enable Batch Processing</div>
<svg class="a" style="left:729px;top:205px;" width="14" height="14" viewBox="0 0 14 14"><circle cx="6.5" cy="6.5" r="5.8" fill="#fff" stroke="#bcbcbc"/><circle cx="6.5" cy="6.5" r="3.2" fill="#c4c4c4"/></svg>
<svg class="a" style="left:729px;top:225px;" width="14" height="14" viewBox="0 0 14 14"><circle cx="6.5" cy="6.5" r="5.8" fill="#fff" stroke="#bcbcbc"/></svg>
<div class="t" style="left:748.0px;top:206.7px;font-size:11px;color:#1b4189;transform:scaleX(1.1667);transform-origin:0 0;">Custom Data Sheet</div>
<div class="t" style="left:748.0px;top:226.7px;font-size:11px;color:#1b4189;transform:scaleX(1.1504);transform-origin:0 0;">Use Created Data List</div>
<div class="a" style="left:967px;top:197px;width:13px;height:13px;background:#fff;border:1px solid #c8c8c8;"></div>
<div class="t" style="left:986.0px;top:198.2px;font-size:11px;color:#1b4189;transform:scaleX(1.1440);transform-origin:0 0;">Use Barcode Value</div>
<div class="a" style="left:967px;top:213px;width:13px;height:13px;background:#fff;border:1px solid #c8c8c8;"></div>
<div class="t" style="left:986.0px;top:214.5px;font-size:11px;color:#1b4189;transform:scaleX(1.1389);transform-origin:0 0;">Use Barcode Header</div>
<div class="a" style="left:967px;top:230px;width:13px;height:13px;background:#fff;border:1px solid #c8c8c8;"></div>
<div class="t" style="left:986.0px;top:231.0px;font-size:11px;color:#1b4189;transform:scaleX(1.1378);transform-origin:0 0;">Use Barcode Footer</div>
<div class="a" style="left:1124px;top:212px;width:24px;height:21px;background:#dadada;border:1px solid #c4c4c4;"></div>
<svg class="a" style="left:1129px;top:215px;" width="14" height="14" viewBox="0 0 14 14"><circle cx="7" cy="7" r="6.5" fill="#9a9a9a" stroke="#bbb"/><text x="7" y="11.5" font-size="11" font-weight="bold" fill="#eee" text-anchor="middle" font-family="Liberation Sans">?</text></svg>
<div class="a" style="left:1px;top:259px;width:752px;height:275px;background:#f8f9fc;border:1px solid #6a6a6a;"></div>
<div class="t" style="left:16.3px;top:270.2px;font-size:12px;transform:scaleX(0.8959);transform-origin:0 0;">Barcode Value :</div>
<div class="a" style="left:121px;top:266px;width:248px;height:20px;background:#fff;border:1px solid #7a7a7a;"></div>
<div class="t" style="left:124.6px;top:270.2px;font-size:11px;transform:scaleX(1.1277);transform-origin:0 0;">123456789012</div>
<div class="a" style="left:15px;top:297px;width:12px;height:12px;background:#fff;border:1px solid #333;"></div>
<div class="t" style="left:33.5px;top:296.8px;font-size:12px;transform:scaleX(0.8664);transform-origin:0 0;">Add Checksum</div>
<div class="a" style="left:143px;top:296px;width:13px;height:13px;background:#fff;border:1px solid #cfcfcf;"></div>
<div class="t" style="left:162.3px;top:296.5px;font-size:12px;color:#6d6d6d;transform:scaleX(0.8740);transform-origin:0 0;">Show Checksum</div>
<div class="t" style="left:16.3px;top:326.1px;font-size:12px;transform:scaleX(0.8792);transform-origin:0 0;">Barcode Header :</div>
<div class="a" style="left:121px;top:322px;width:248px;height:20px;background:#fff;border:1px solid #7a7a7a;"></div>
<div class="t" style="left:124.6px;top:326.0px;font-size:11px;transform:scaleX(1.1389);transform-origin:0 0;">Header Demo</div>
<div class="t" style="left:16.3px;top:355.3px;font-size:12px;transform:scaleX(0.8838);transform-origin:0 0;">Barcode Footer :</div>
<div class="a" style="left:121px;top:352px;width:247px;height:20px;background:#fff;border:1px solid #7a7a7a;"></div>
<div class="t" style="left:124.6px;top:355.5px;font-size:11px;transform:scaleX(1.1323);transform-origin:0 0;">Footer Demo</div>
<div class="t" style="left:16.3px;top:383.0px;font-size:12px;transform:scaleX(0.8757);transform-origin:0 0;">Measurement Unit :</div>
<div class="a" style="left:121px;top:381px;width:132px;height:21px;background:#e1e1e1;border:1px solid #adadad;"></div>
<div class="t" style="left:124.5px;top:386.8px;font-size:12px;transform:scaleX(0.8640);transform-origin:0 0;">Centimeters (cm)</div>
<svg class="a" style="left:240px;top:389.5px;" width="9" height="5" viewBox="0 0 9 5"><path d="M0.6 0.6 L4.5 4.3 L8.4 0.6" fill="none" stroke="#3a3a3a" stroke-width="1.2"/></svg>
<div class="t" style="left:393.3px;top:270.7px;font-size:11px;transform:scaleX(1.1681);transform-origin:0 0;">Align Header&nbsp; :</div>
<div class="a" style="left:502px;top:265px;width:69px;height:21px;background:#e1e1e1;border:1px solid #adadad;"></div>
<div class="t" style="left:507.0px;top:270.7px;font-size:11px;transform:scaleX(1.1504);transform-origin:0 0;">Center</div>
<svg class="a" style="left:558px;top:274px;" width="9" height="5" viewBox="0 0 9 5"><path d="M0.6 0.6 L4.5 4.3 L8.4 0.6" fill="none" stroke="#3a3a3a" stroke-width="1.2"/></svg>
<div class="t" style="left:582.0px;top:270.7px;font-size:11px;transform:scaleX(1.1556);transform-origin:0 0;">Align Footer :</div>
<div class="a" style="left:671px;top:265px;width:78px;height:21px;background:#e1e1e1;border:1px solid #adadad;"></div>
<div class="t" style="left:676.0px;top:270.7px;font-size:11px;transform:scaleX(1.1504);transform-origin:0 0;">Center</div>
<svg class="a" style="left:736px;top:274px;" width="9" height="5" viewBox="0 0 9 5"><path d="M0.6 0.6 L4.5 4.3 L8.4 0.6" fill="none" stroke="#3a3a3a" stroke-width="1.2"/></svg>
<div class="t" style="left:393.3px;top:299.1px;font-size:11px;transform:scaleX(1.1908);transform-origin:0 0;">Bar Height (cm) :</div>
<div class="a" style="left:502px;top:293px;width:68px;height:21px;background:#fff;border:1px solid #a9b4c4;"></div>
<div class="t" style="left:505.0px;top:296.7px;font-size:11px;transform:scaleX(1.0897);transform-origin:0 0;">1.000</div>
<div class="a" style="left:554px;top:294px;width:14px;height:18px;background:#e6e6e6;border:1px solid #cfcfcf;"></div>
<div class="a" style="left:554px;top:302px;width:14px;height:1px;background:#c4c4c4;"></div>
<svg class="a" style="left:557px;top:296px;" width="8" height="14" viewBox="0 0 8 14"><path d="M4 0.5 L7.5 4 H0.5 Z M0.5 9.5 H7.5 L4 13 Z" fill="#111"/></svg>
<div class="t" style="left:582.0px;top:299.1px;font-size:11px;transform:scaleX(1.2116);transform-origin:0 0;">Density (cm) :</div>
<div class="a" style="left:673px;top:293px;width:75px;height:21px;background:#fff;border:1px solid #a9b4c4;"></div>
<div class="t" style="left:676.0px;top:296.7px;font-size:11px;transform:scaleX(1.0897);transform-origin:0 0;">0.060</div>
<div class="a" style="left:732px;top:294px;width:14px;height:18px;background:#e6e6e6;border:1px solid #cfcfcf;"></div>
<div class="a" style="left:732px;top:302px;width:14px;height:1px;background:#c4c4c4;"></div>
<svg class="a" style="left:735px;top:296px;" width="8" height="14" viewBox="0 0 8 14"><path d="M4 0.5 L7.5 4 H0.5 Z M0.5 9.5 H7.5 L4 13 Z" fill="#111"/></svg>
<div class="a" style="left:396px;top:327px;width:13px;height:13px;background:#fff;border:1px solid #333;"></div>
<div class="t" style="left:415.7px;top:327.7px;font-size:11px;transform:scaleX(1.1337);transform-origin:0 0;">Hide Barcode Value</div>
<div class="a" style="left:572px;top:327px;width:13px;height:13px;background:#fff;border:1px solid #333;"></div>
<div class="t" style="left:591.0px;top:327.7px;font-size:11px;transform:scaleX(1.1525);transform-origin:0 0;">Show Barcode Value in Top</div>
<div class="a" style="left:396px;top:355px;width:13px;height:13px;background:#fff;border:1px solid #333;"></div>
<div class="t" style="left:415.0px;top:355.7px;font-size:11px;transform:scaleX(1.1276);transform-origin:0 0;">Hide Barcode Header</div>
<div class="a" style="left:570px;top:355px;width:13px;height:13px;background:#fff;border:1px solid #333;"></div>
<div class="t" style="left:589.0px;top:355.7px;font-size:11px;transform:scaleX(1.1389);transform-origin:0 0;">Hide Barcode Footer</div>
<div class="a" style="left:11px;top:403px;width:383px;height:19px;background:#f0f0f0;border:1px solid #dadada;border-bottom:none;"></div>
<div class="a" style="left:113px;top:403px;width:1px;height:19px;background:#dadada;"></div>
<div class="a" style="left:208px;top:403px;width:1px;height:19px;background:#dadada;"></div>
<div class="a" style="left:296px;top:403px;width:1px;height:19px;background:#dadada;"></div>
<div class="t" style="left:17.9px;top:406.8px;font-size:12px;transform:scaleX(1.0359);transform-origin:0 0;">General Settings</div>
<div class="t" style="left:210.7px;top:406.8px;font-size:12px;transform:scaleX(1.0653);transform-origin:0 0;">Color Settings</div>
<div class="t" style="left:303.0px;top:406.8px;font-size:12px;transform:scaleX(1.0869);transform-origin:0 0;">Image Settings</div>
<div class="a" style="left:9px;top:421px;width:740px;height:94px;background:#fdfdfe;border:1px solid #dcdcdc;border-right:none;border-top:none;"></div>
<div class="a" style="left:411px;top:424px;width:338px;height:1px;background:#dcdcdc;"></div>
<div class="a" style="left:13px;top:426px;width:731px;height:86px;background:#fdfdfe;border:1px solid #6e6e6e;"></div>
<div class="a" style="left:13px;top:423px;width:398px;height:1px;background:#6e6e6e;"></div>
<div class="a" style="left:13px;top:423px;width:1px;height:4px;background:#6e6e6e;"></div>
<div class="a" style="left:70px;top:428px;width:545px;height:66px;background:#f8f9fc;"></div>
<div class="a" style="left:112px;top:398px;width:98px;height:29px;background:#5e98f2;"></div>
<div class="a" style="left:114px;top:400px;width:94px;height:25px;background:#fff;"></div>
<div class="a" style="left:117px;top:401px;width:88px;height:24px;border:1px solid #dcdcdc;border-bottom:none;"></div>
<div class="t" style="left:124.5px;top:404.8px;font-size:12px;transform:scaleX(1.0351);transform-origin:0 0;">Font Settings</div>
<div class="t" style="left:77.4px;top:446.8px;font-size:12px;transform:scaleX(1.0551);transform-origin:0 0;">Barcode Header Font :</div>
<div class="t" style="left:77.4px;top:478.1px;font-size:12px;transform:scaleX(1.0502);transform-origin:0 0;">Barcode Footer Font :</div>
<div class="t" style="left:407.2px;top:446.8px;font-size:12px;transform:scaleX(1.0533);transform-origin:0 0;">Barcode Value Font :</div>
<div class="a" style="left:246px;top:441px;width:36px;height:21px;background:#e1e1e1;border:1px solid #adadad;"></div>
<div class="t" style="left:258.5px;top:444.8px;font-size:12px;">...</div>
<div class="a" style="left:246px;top:473px;width:36px;height:21px;background:#e1e1e1;border:1px solid #adadad;"></div>
<div class="t" style="left:258.5px;top:476.8px;font-size:12px;">...</div>
<div class="a" style="left:566px;top:442px;width:36px;height:21px;background:#e1e1e1;border:1px solid #adadad;"></div>
<div class="t" style="left:578.5px;top:445.8px;font-size:12px;">...</div>
<div class="a" style="left:160px;top:428px;width:2px;height:10px;background:#000;"></div>
<div class="a" style="left:160px;top:436px;width:566px;height:2px;background:#000;"></div>
<div class="a" style="left:758px;top:259px;width:410px;height:140px;background:#f8f9fc;border:2px solid #5f5f5f;border-right:none;border-bottom:none;"></div>
<div class="a" style="left:760px;top:303px;width:408px;height:2px;background:#5f5f5f;"></div>
<svg class="a" style="left:771px;top:272px;" width="23" height="21" viewBox="0 0 23 21"><path d="M0.5 5 Q0.5 0.5 5 0.5 H18.5 V20.5 H0.5 Z" fill="#dcdcdc" stroke="#b9b9b9"/><path d="M4 3 H17 V6 H3 Z" fill="#a8a8a8"/><path d="M4.5 8 l5 5 M9.5 8 l-5 5" stroke="#8f8f8f" stroke-width="1.4"/><rect x="3" y="16" width="4" height="3" fill="#a9a9a9"/><rect x="8" y="16" width="5" height="3" fill="#a9a9a9"/><rect x="17" y="8" width="6" height="3" fill="#a9a9a9"/><rect x="17" y="12" width="6" height="3" fill="#a9a9a9"/><rect x="17" y="16" width="6" height="3" fill="#a9a9a9"/></svg>
<div class="a" style="left:816px;top:269px;width:1px;height:28px;background:#555;"></div>
<svg class="a" style="left:829px;top:273px;" width="28" height="21" viewBox="0 0 28 21"><defs><linearGradient id="np" x1="0" y1="0" x2="1" y2="1"><stop offset="0" stop-color="#d6d6d6"/><stop offset="1" stop-color="#a8a8a8"/></linearGradient></defs><path d="M1 15 L9 2 L20 4 L15 19 Z" fill="url(#np)" stroke="#c9c9c9" stroke-width="0.6"/><path d="M15 19 L20 4 L22 16 Z" fill="#9c9c9c"/><path d="M21 5 Q27 6 25 13" fill="none" stroke="#808080" stroke-width="2.2"/><path d="M22 11 L27 12 L23.5 17Z" fill="#808080"/></svg>
<div class="a" style="left:873px;top:269px;width:1px;height:28px;background:#555;"></div>
<div class="t" style="left:890.5px;top:274.2px;font-size:21px;color:#6a6a6a;font-family:'Liberation Serif',serif;-webkit-text-stroke:0.6px #6a6a6a;">&Sigma;</div>
<div class="t" style="left:905.0px;top:276.6px;font-size:17px;color:#6a6a6a;font-family:'Liberation Serif',serif;"><i>f</i></div>
<div class="t" style="left:911.5px;top:284.2px;font-size:11px;color:#6a6a6a;font-family:'Liberation Serif',serif;"><i>x</i></div>
<div class="a" style="left:930px;top:269px;width:1px;height:28px;background:#555;"></div>
<svg class="a" style="left:942px;top:271px;" width="30" height="23" viewBox="0 0 30 23"><path d="M1 5 Q1 1 5 1 H18 V18 H1 Z" fill="#dedede" stroke="#b5b5b5"/><rect x="3.5" y="3" width="13" height="3" fill="#a9a9a9"/><path d="M5 8 l5 5 M10 8 l-5 5" stroke="#999" stroke-width="1.2"/><rect x="3" y="15" width="4" height="2" fill="#aaa"/><path d="M8 21 L12 9 L23 10 L20 22 Z" fill="#bdbdbd" stroke="#d0d0d0" stroke-width="0.6"/><path d="M20 22 L23 10 L25 20 Z" fill="#9a9a9a"/><path d="M21 3 Q28 2 27 10" fill="none" stroke="#8a8a8a" stroke-width="2"/><path d="M19 3.5 L23 0 L23.5 6 Z" fill="#8a8a8a"/></svg>
<div class="t" style="left:1048.0px;top:280.5px;font-size:11px;color:#8f8f8f;transform:scaleX(1.1694);transform-origin:0 0;">Total Rows : 0</div>
<div class="a" style="left:760px;top:305px;width:42px;height:94px;background:#fcfcfd;"></div>
<div class="a" style="left:764px;top:309px;width:33px;height:27px;background:#d4d4d4;border:1px solid #dedede;"></div>
<div class="a" style="left:764px;top:338px;width:33px;height:27px;background:#d4d4d4;border:1px solid #dedede;"></div>
<div class="a" style="left:764px;top:367px;width:33px;height:27px;background:#d4d4d4;border:1px solid #dedede;"></div>
<svg class="a" style="left:772px;top:315px;" width="16" height="16" viewBox="0 0 16 16"><path d="M6.5 0.5 H9.5 V6.5 H15.5 V9.5 H9.5 V15.5 H6.5 V9.5 H0.5 V6.5 H6.5 Z" fill="#a0a0a0" stroke="#8c8c8c" stroke-width="0.8"/></svg>
<svg class="a" style="left:773px;top:345px;" width="15" height="15" viewBox="0 0 15 15"><path d="M1 3.5 L3.5 1 L7.5 5 L11.5 1 L14 3.5 L10 7.5 L14 11.5 L11.5 14 L7.5 10 L3.5 14 L1 11.5 L5 7.5 Z" fill="#a8a8a8" stroke="#959595" stroke-width="0.8"/></svg>
<svg class="a" style="left:771px;top:371px;" width="19" height="20" viewBox="0 0 19 20"><rect x="2" y="1" width="15" height="2" fill="#a3a3a3"/><path d="M9.5 4 L17 12 H12 V20 H7 V12 H2 Z" fill="#a3a3a3"/></svg>
<div class="a" style="left:802px;top:306px;width:364px;height:85px;background:#f0f0f0;border:1px solid #111;border-right-width:2px;border-bottom:none;"></div>
<div class="a" style="left:803px;top:307px;width:360px;height:78px;background:#fff;"></div>
<div class="a" style="left:803px;top:307px;width:360px;height:34px;background:#f0f0f0;"></div>
<div class="a" style="left:803px;top:341px;width:32px;height:44px;background:#f0f0f0;"></div>
<div class="a" style="left:803px;top:342px;width:32px;height:1px;background:#fff;"></div>
<div class="a" style="left:805px;top:343px;width:30px;height:20px;background:#0078d7;"></div>
<div class="a" style="left:835px;top:342px;width:328px;height:21px;background:#0078d7;"></div>
<div class="a" style="left:835px;top:307px;width:1px;height:78px;background:#a0a0a0;"></div>
<div class="a" style="left:935px;top:307px;width:1px;height:78px;background:#a0a0a0;"></div>
<div class="a" style="left:1017px;top:307px;width:1px;height:78px;background:#a0a0a0;"></div>
<div class="a" style="left:1098px;top:307px;width:1px;height:78px;background:#a0a0a0;"></div>
<div class="a" style="left:1163px;top:307px;width:1px;height:78px;background:#a0a0a0;"></div>
<div class="a" style="left:803px;top:341px;width:360px;height:1px;background:#a0a0a0;"></div>
<div class="a" style="left:803px;top:363px;width:360px;height:1px;background:#a0a0a0;"></div>
<div class="a" style="left:803px;top:384px;width:360px;height:1px;background:#a0a0a0;"></div>
<div class="t" style="left:842.5px;top:320.7px;font-size:11px;transform:scaleX(1.1379);transform-origin:0 0;">Barcode Value</div>
<div class="t" style="left:942.5px;top:313.7px;font-size:11px;transform:scaleX(1.1590);transform-origin:0 0;">Barcode</div>
<div class="t" style="left:942.5px;top:326.7px;font-size:11px;transform:scaleX(1.1087);transform-origin:0 0;">Header</div>
<div class="t" style="left:1024.2px;top:313.7px;font-size:11px;transform:scaleX(1.1590);transform-origin:0 0;">Barcode</div>
<div class="t" style="left:1024.2px;top:326.7px;font-size:11px;transform:scaleX(1.1636);transform-origin:0 0;">Footer</div>
<div class="t" style="left:1104.8px;top:313.7px;font-size:11px;transform:scaleX(1.2155);transform-origin:0 0;">Print</div>
<div class="t" style="left:1104.8px;top:326.7px;font-size:11px;transform:scaleX(1.1521);transform-origin:0 0;">Quantity</div>
<svg class="a" style="left:809px;top:348px;" width="6" height="10" viewBox="0 0 6 10"><path d="M0 0 L5.5 4.5 L0 9 Z" fill="#fff"/></svg>
<div class="t" style="left:840.0px;top:347.9px;font-size:11px;color:#fff;transform:scaleX(1.1264);transform-origin:0 0;">123456789012</div>
<div class="t" style="left:939.2px;top:347.9px;font-size:11px;color:#fff;transform:scaleX(1.1087);transform-origin:0 0;">Header</div>
<div class="t" style="left:1021.3px;top:347.9px;font-size:11px;color:#fff;transform:scaleX(1.1636);transform-origin:0 0;">Footer</div>
<div class="t" style="left:1103.8px;top:347.9px;font-size:11px;color:#fff;transform:scaleX(1.0612);transform-origin:0 0;">1</div>
<svg class="a" style="left:809px;top:371px;" width="10" height="9" viewBox="0 0 10 9"><path d="M5 0 V9 M0.5 2.2 L9.5 6.8 M9.5 2.2 L0.5 6.8" stroke="#000" stroke-width="1.2"/></svg>
<div class="a" style="left:758px;top:399px;width:410px;height:135px;background:#f8f9fc;border:2px solid #5f5f5f;border-top:none;border-right:none;border-bottom-width:1px;"></div>
<div class="a" style="left:802px;top:385px;width:362px;height:120px;background:#f0f0f0;border:1px solid #1a1a1a;border-top:none;border-left:none;"></div>
<div class="a" style="left:0px;top:534px;width:1169px;height:4px;background:#fdfdfe;"></div>
<div class="a" style="left:0px;top:538px;width:1169px;height:1px;background:#6a6a6a;"></div>
<div class="a" style="left:2px;top:539px;width:1165px;height:216px;background:#bfdbfd;"></div>
<div class="a" style="left:25px;top:562px;width:1142px;height:197px;background:#fafbfd;border:2px solid #737373;border-right:none;border-bottom:none;border-left:none;"></div>
<div class="a" style="left:25px;top:562px;width:2px;height:191px;background:#737373;"></div>
<div class="a" style="left:2px;top:755px;width:25px;height:4px;background:#fefefe;"></div>
<div class="a" style="left:25px;top:753px;width:389px;height:1px;background:#e2e2e2;"></div>
<div class="a" style="left:25px;top:755px;width:389px;height:1px;background:#e2e2e2;"></div>
<div class="a" style="left:25px;top:756px;width:389px;height:3px;background:#fefefe;"></div>
<div class="a" style="left:0px;top:759px;width:1169px;height:23px;background:#d6e2f2;"></div>
<div class="a" style="left:0px;top:781px;width:1169px;height:1px;background:#7a7a7a;"></div>
<div class="a" style="left:0px;top:533px;width:1px;height:249px;background:#808080;"></div>
<div class="a" style="left:1px;top:539px;width:2px;height:216px;background:#666;"></div>
<div class="a" style="left:1167px;top:0px;width:2px;height:782px;background:#7a7a7a;"></div>
<svg class="a" style="left:4px;top:598px;" width="21" height="119" viewBox="0 0 21 119"><rect x="0.5" y="0.5" width="20" height="118" fill="#fff" stroke="#a0a0a0"/><rect x="2" y="38" width="19" height="1" fill="#000"/><text x="8" y="33" font-size="11" text-anchor="middle" font-family="Liberation Sans">1</text><rect x="2" y="75" width="19" height="1" fill="#000"/><text x="8" y="70" font-size="11" text-anchor="middle" font-family="Liberation Sans">2</text><rect x="2" y="112" width="19" height="1" fill="#000"/><text x="8" y="107" font-size="11" text-anchor="middle" font-family="Liberation Sans">3</text><rect x="18" y="5" width="2" height="1" fill="#111"/><rect x="18" y="8" width="2" height="1" fill="#111"/><rect x="18" y="12" width="2" height="1" fill="#111"/><rect x="18" y="16" width="2" height="1" fill="#111"/><rect x="16" y="20" width="4" height="1" fill="#111"/><rect x="18" y="23" width="2" height="1" fill="#111"/><rect x="18" y="27" width="2" height="1" fill="#111"/><rect x="18" y="31" width="2" height="1" fill="#111"/><rect x="18" y="34" width="2" height="1" fill="#111"/><rect x="18" y="42" width="2" height="1" fill="#111"/><rect x="18" y="45" width="2" height="1" fill="#111"/><rect x="18" y="49" width="2" height="1" fill="#111"/><rect x="18" y="53" width="2" height="1" fill="#111"/><rect x="16" y="56" width="4" height="1" fill="#111"/><rect x="18" y="60" width="2" height="1" fill="#111"/><rect x="18" y="64" width="2" height="1" fill="#111"/><rect x="18" y="68" width="2" height="1" fill="#111"/><rect x="18" y="71" width="2" height="1" fill="#111"/><rect x="18" y="79" width="2" height="1" fill="#111"/><rect x="18" y="82" width="2" height="1" fill="#111"/><rect x="18" y="86" width="2" height="1" fill="#111"/><rect x="18" y="90" width="2" height="1" fill="#111"/><rect x="16" y="94" width="4" height="1" fill="#111"/><rect x="18" y="97" width="2" height="1" fill="#111"/><rect x="18" y="101" width="2" height="1" fill="#111"/><rect x="18" y="105" width="2" height="1" fill="#111"/><rect x="18" y="108" width="2" height="1" fill="#111"/></svg>
<svg class="a" style="left:468px;top:541px;" width="237" height="21" viewBox="0 0 237 21"><rect x="0.5" y="0.5" width="236" height="20" fill="#fff" stroke="#a0a0a0"/><rect x="38" y="2" width="1" height="19" fill="#000"/><text x="29.5" y="13" font-size="11" text-anchor="middle" font-family="Liberation Sans">1</text><rect x="75" y="2" width="1" height="19" fill="#000"/><text x="66.5" y="13" font-size="11" text-anchor="middle" font-family="Liberation Sans">2</text><rect x="112" y="2" width="1" height="19" fill="#000"/><text x="103.5" y="13" font-size="11" text-anchor="middle" font-family="Liberation Sans">3</text><rect x="149" y="2" width="1" height="19" fill="#000"/><text x="140.5" y="13" font-size="11" text-anchor="middle" font-family="Liberation Sans">4</text><rect x="186" y="2" width="1" height="19" fill="#000"/><text x="177.5" y="13" font-size="11" text-anchor="middle" font-family="Liberation Sans">5</text><rect x="223" y="2" width="1" height="19" fill="#000"/><text x="214.5" y="13" font-size="11" text-anchor="middle" font-family="Liberation Sans">6</text><rect x="5" y="17" width="1" height="2" fill="#111"/><rect x="8" y="17" width="1" height="2" fill="#111"/><rect x="12" y="17" width="1" height="2" fill="#111"/><rect x="16" y="17" width="1" height="2" fill="#111"/><rect x="20" y="15" width="1" height="4" fill="#111"/><rect x="23" y="17" width="1" height="2" fill="#111"/><rect x="27" y="17" width="1" height="2" fill="#111"/><rect x="31" y="17" width="1" height="2" fill="#111"/><rect x="34" y="17" width="1" height="2" fill="#111"/><rect x="42" y="17" width="1" height="2" fill="#111"/><rect x="45" y="17" width="1" height="2" fill="#111"/><rect x="49" y="17" width="1" height="2" fill="#111"/><rect x="53" y="17" width="1" height="2" fill="#111"/><rect x="56" y="15" width="1" height="4" fill="#111"/><rect x="60" y="17" width="1" height="2" fill="#111"/><rect x="64" y="17" width="1" height="2" fill="#111"/><rect x="68" y="17" width="1" height="2" fill="#111"/><rect x="71" y="17" width="1" height="2" fill="#111"/><rect x="79" y="17" width="1" height="2" fill="#111"/><rect x="82" y="17" width="1" height="2" fill="#111"/><rect x="86" y="17" width="1" height="2" fill="#111"/><rect x="90" y="17" width="1" height="2" fill="#111"/><rect x="94" y="15" width="1" height="4" fill="#111"/><rect x="97" y="17" width="1" height="2" fill="#111"/><rect x="101" y="17" width="1" height="2" fill="#111"/><rect x="105" y="17" width="1" height="2" fill="#111"/><rect x="108" y="17" width="1" height="2" fill="#111"/><rect x="116" y="17" width="1" height="2" fill="#111"/><rect x="119" y="17" width="1" height="2" fill="#111"/><rect x="123" y="17" width="1" height="2" fill="#111"/><rect x="127" y="17" width="1" height="2" fill="#111"/><rect x="130" y="15" width="1" height="4" fill="#111"/><rect x="134" y="17" width="1" height="2" fill="#111"/><rect x="138" y="17" width="1" height="2" fill="#111"/><rect x="142" y="17" width="1" height="2" fill="#111"/><rect x="145" y="17" width="1" height="2" fill="#111"/><rect x="153" y="17" width="1" height="2" fill="#111"/><rect x="156" y="17" width="1" height="2" fill="#111"/><rect x="160" y="17" width="1" height="2" fill="#111"/><rect x="164" y="17" width="1" height="2" fill="#111"/><rect x="168" y="15" width="1" height="4" fill="#111"/><rect x="171" y="17" width="1" height="2" fill="#111"/><rect x="175" y="17" width="1" height="2" fill="#111"/><rect x="179" y="17" width="1" height="2" fill="#111"/><rect x="182" y="17" width="1" height="2" fill="#111"/><rect x="190" y="17" width="1" height="2" fill="#111"/><rect x="193" y="17" width="1" height="2" fill="#111"/><rect x="197" y="17" width="1" height="2" fill="#111"/><rect x="201" y="17" width="1" height="2" fill="#111"/><rect x="204" y="15" width="1" height="4" fill="#111"/><rect x="208" y="17" width="1" height="2" fill="#111"/><rect x="212" y="17" width="1" height="2" fill="#111"/><rect x="216" y="17" width="1" height="2" fill="#111"/><rect x="219" y="17" width="1" height="2" fill="#111"/><rect x="227" y="17" width="1" height="2" fill="#111"/><rect x="230" y="17" width="1" height="2" fill="#111"/><rect x="234" y="17" width="1" height="2" fill="#111"/></svg>
<div class="a" style="left:462px;top:581px;width:258px;height:142px;background:rgba(0,0,0,0.045);filter:blur(2.5px);"></div>
<div class="a" style="left:467px;top:586px;width:249px;height:133px;background:#fafbfd;"></div>
<div class="a" style="left:471px;top:593px;width:241px;height:119px;background:#ffffff;"></div>
<div class="t" style="left:553.0px;top:601.2px;font-size:13px;font-family:'Liberation Serif',serif;-webkit-text-stroke:0;transform:scaleX(1.0129);transform-origin:0 0;">Header Demo</div>
<div class="t" style="left:554.0px;top:668.0px;font-size:13px;font-family:'Liberation Serif',serif;-webkit-text-stroke:0;transform:scaleX(0.9192);transform-origin:0 0;">123456789012</div>
<div class="t" style="left:555.7px;top:692.0px;font-size:13px;font-family:'Liberation Serif',serif;-webkit-text-stroke:0;transform:scaleX(1.0005);transform-origin:0 0;">Footer Demo</div>
<svg class="a" style="left:478px;top:623px;" width="226" height="37" viewBox="0 0 226 37"><rect x="0" y="0" width="2" height="37" fill="#000"/><rect x="3" y="0" width="2" height="37" fill="#000"/><rect x="7" y="0" width="2" height="37" fill="#000"/><rect x="10" y="0" width="1" height="37" fill="#000"/><rect x="14" y="0" width="1" height="37" fill="#000"/><rect x="17" y="0" width="2" height="37" fill="#000"/><rect x="20" y="0" width="1" height="37" fill="#000"/><rect x="24" y="0" width="1" height="37" fill="#000"/><rect x="27" y="0" width="2" height="37" fill="#000"/><rect x="31" y="0" width="2" height="37" fill="#000"/><rect x="34" y="0" width="1" height="37" fill="#000"/><rect x="38" y="0" width="1" height="37" fill="#000"/><rect x="41" y="0" width="1" height="37" fill="#000"/><rect x="44" y="0" width="2" height="37" fill="#000"/><rect x="48" y="0" width="2" height="37" fill="#000"/><rect x="51" y="0" width="1" height="37" fill="#000"/><rect x="55" y="0" width="1" height="37" fill="#000"/><rect x="58" y="0" width="1" height="37" fill="#000"/><rect x="61" y="0" width="1" height="37" fill="#000"/><rect x="65" y="0" width="1" height="37" fill="#000"/><rect x="68" y="0" width="1" height="37" fill="#000"/><rect x="72" y="0" width="1" height="37" fill="#000"/><rect x="75" y="0" width="1" height="37" fill="#000"/><rect x="78" y="0" width="2" height="37" fill="#000"/><rect x="82" y="0" width="2" height="37" fill="#000"/><rect x="85" y="0" width="2" height="37" fill="#000"/><rect x="89" y="0" width="1" height="37" fill="#000"/><rect x="92" y="0" width="1" height="37" fill="#000"/><rect x="95" y="0" width="2" height="37" fill="#000"/><rect x="99" y="0" width="2" height="37" fill="#000"/><rect x="102" y="0" width="1" height="37" fill="#000"/><rect x="106" y="0" width="1" height="37" fill="#000"/><rect x="109" y="0" width="2" height="37" fill="#000"/><rect x="113" y="0" width="2" height="37" fill="#000"/><rect x="116" y="0" width="2" height="37" fill="#000"/><rect x="119" y="0" width="1" height="37" fill="#000"/><rect x="123" y="0" width="2" height="37" fill="#000"/><rect x="126" y="0" width="2" height="37" fill="#000"/><rect x="130" y="0" width="1" height="37" fill="#000"/><rect x="133" y="0" width="2" height="37" fill="#000"/><rect x="136" y="0" width="1" height="37" fill="#000"/><rect x="140" y="0" width="1" height="37" fill="#000"/><rect x="143" y="0" width="1" height="37" fill="#000"/><rect x="147" y="0" width="2" height="37" fill="#000"/><rect x="150" y="0" width="1" height="37" fill="#000"/><rect x="153" y="0" width="2" height="37" fill="#000"/><rect x="157" y="0" width="2" height="37" fill="#000"/><rect x="160" y="0" width="1" height="37" fill="#000"/><rect x="164" y="0" width="1" height="37" fill="#000"/><rect x="167" y="0" width="1" height="37" fill="#000"/><rect x="170" y="0" width="1" height="37" fill="#000"/><rect x="174" y="0" width="1" height="37" fill="#000"/><rect x="177" y="0" width="1" height="37" fill="#000"/><rect x="181" y="0" width="2" height="37" fill="#000"/><rect x="184" y="0" width="2" height="37" fill="#000"/><rect x="188" y="0" width="2" height="37" fill="#000"/><rect x="191" y="0" width="2" height="37" fill="#000"/><rect x="194" y="0" width="1" height="37" fill="#000"/><rect x="198" y="0" width="1" height="37" fill="#000"/><rect x="201" y="0" width="2" height="37" fill="#000"/><rect x="205" y="0" width="2" height="37" fill="#000"/><rect x="208" y="0" width="1" height="37" fill="#000"/><rect x="211" y="0" width="2" height="37" fill="#000"/><rect x="215" y="0" width="2" height="37" fill="#000"/><rect x="218" y="0" width="1" height="37" fill="#000"/><rect x="222" y="0" width="2" height="37" fill="#000"/></svg>
<div class="a" style="left:723px;top:389px;width:440px;height:352px;background:rgba(0,0,0,0.06);filter:blur(3px);"></div>
<div class="a" style="left:726px;top:391px;width:433px;height:347px;background:#f0f0f0;border:1px solid #8a8a8a;"></div>
<div class="a" style="left:727px;top:392px;width:431px;height:25px;background:#ffffff;"></div>
<div class="t" style="left:730.5px;top:397.4px;font-size:12px;transform:scaleX(0.9660);transform-origin:0 0;">Font</div>
<svg class="a" style="left:1137px;top:398px;" width="12" height="12" viewBox="0 0 12 12"><path d="M0.5 0.5 L11.5 11.5 M11.5 0.5 L0.5 11.5" stroke="#000" stroke-width="1.1"/></svg>
<div class="t" style="left:738.4px;top:428.6px;font-size:12px;transform:scaleX(0.8407);transform-origin:0 0;"><u>F</u>ont:</div>
<div class="t" style="left:892.8px;top:428.6px;font-size:12px;transform:scaleX(0.9391);transform-origin:0 0;">Font st<u>y</u>le:</div>
<div class="t" style="left:1012.0px;top:428.6px;font-size:12px;transform:scaleX(0.8239);transform-origin:0 0;"><u>S</u>ize:</div>
<div class="a" style="left:738px;top:443px;width:147px;height:20px;background:#fff;border:1px solid #0078d7;"></div>
<div class="t" style="left:741.0px;top:447.0px;font-size:12px;transform:scaleX(0.8907);transform-origin:0 0;">@NSimSun</div>
<div class="a" style="left:892px;top:443px;width:111px;height:20px;background:#fff;border:1px solid #0078d7;"></div>
<div class="t" style="left:895.0px;top:447.0px;font-size:12px;transform:scaleX(0.9517);transform-origin:0 0;">Regular</div>
<div class="a" style="left:1012px;top:443px;width:54px;height:20px;background:#fff;border:1px solid #0078d7;"></div>
<div class="t" style="left:1015.0px;top:447.0px;font-size:12px;transform:scaleX(0.8982);transform-origin:0 0;">10</div>
<div class="a" style="left:738px;top:463px;width:147px;height:99px;background:#fff;border:1px solid #828790;"></div>
<div class="a" style="left:740px;top:522px;width:126px;height:19px;background:#0078d7;"></div>
<div class="t" style="left:740.0px;top:468.0px;font-size:13px;font-family:'Liberation Mono',monospace;transform:scaleX(0.9101);transform-origin:0 0;">@MS Mincho</div>
<div class="t" style="left:740.0px;top:487.3px;font-size:12px;transform:scaleX(1.0367);transform-origin:0 0;">@MS PGothic</div>
<div class="t" style="left:740.0px;top:506.2px;font-size:12px;transform:scaleX(1.0056);transform-origin:0 0;">@MS UI Gothic</div>
<div class="t" style="left:740.0px;top:524.9px;font-size:12.5px;color:#fff;font-family:'Liberation Mono',monospace;transform:scaleX(0.9664);transform-origin:0 0;">@NSimSun</div>
<div class="t" style="left:740.0px;top:543.4px;font-size:12.5px;color:#444;font-family:'Liberation Serif',serif;transform:scaleX(1.0675);transform-origin:0 0;">@PMingLiU-ExtB</div>
<div class="a" style="left:867px;top:465px;width:18px;height:96px;background:#f0f0f0;"></div>
<div class="a" style="left:868px;top:483px;width:14px;height:17px;background:#cdcdcd;"></div>
<svg class="a" style="left:870px;top:469px;" width="9" height="7" viewBox="0 0 9 7"><path d="M0.5 5.5 L4.5 1.5 L8.5 5.5" fill="none" stroke="#222" stroke-width="1.4"/></svg>
<svg class="a" style="left:870px;top:547px;" width="9" height="7" viewBox="0 0 9 7"><path d="M0.5 1.5 L4.5 5.5 L8.5 1.5" fill="none" stroke="#222" stroke-width="1.4"/></svg>
<div class="a" style="left:892px;top:463px;width:111px;height:99px;background:#fff;border:1px solid #828790;"></div>
<div class="a" style="left:894px;top:465px;width:90px;height:19px;background:#0078d7;"></div>
<div class="t" style="left:894.0px;top:468.9px;font-size:12.5px;color:#fff;font-family:'Liberation Mono',monospace;transform:scaleX(1.0473);transform-origin:0 0;">Regular</div>
<div class="t" style="left:894.0px;top:486.9px;font-size:12.5px;font-family:'Liberation Mono',monospace;transform:scaleX(0.9521);transform-origin:0 0;"><i>Oblique</i></div>
<div class="t" style="left:894.0px;top:505.8px;font-size:12.5px;font-family:'Liberation Mono',monospace;transform:scaleX(1.0661);transform-origin:0 0;"><b>Bold</b></div>
<div class="t" style="left:894.0px;top:524.9px;font-size:12.5px;font-family:'Liberation Mono',monospace;transform:scaleX(1.0907);transform-origin:0 0;"><b><i>Bold Obliqu</i></b></div>
<div class="a" style="left:985px;top:465px;width:17px;height:96px;background:#fff;"></div>
<svg class="a" style="left:988px;top:469px;" width="9" height="7" viewBox="0 0 9 7"><path d="M0.5 5.5 L4.5 1.5 L8.5 5.5" fill="none" stroke="#c8c8c8" stroke-width="1.4"/></svg>
<svg class="a" style="left:988px;top:547px;" width="9" height="7" viewBox="0 0 9 7"><path d="M0.5 1.5 L4.5 5.5 L8.5 1.5" fill="none" stroke="#c8c8c8" stroke-width="1.4"/></svg>
<div class="a" style="left:1012px;top:463px;width:54px;height:95px;background:#fff;border:1px solid #828790;"></div>
<div class="a" style="left:1014px;top:465px;width:33px;height:13px;background:#0078d7;"></div>
<div class="t" style="left:1015.0px;top:465.8px;font-size:12px;color:#fff;transform:scaleX(0.8982);transform-origin:0 0;">10</div>
<div class="t" style="left:1015.0px;top:478.5px;font-size:12px;color:#000;transform:scaleX(0.9624);transform-origin:0 0;">11</div>
<div class="t" style="left:1015.0px;top:491.4px;font-size:12px;color:#000;transform:scaleX(0.8982);transform-origin:0 0;">12</div>
<div class="t" style="left:1015.0px;top:504.3px;font-size:12px;color:#000;transform:scaleX(0.8982);transform-origin:0 0;">14</div>
<div class="t" style="left:1015.0px;top:517.3px;font-size:12px;color:#000;transform:scaleX(0.8982);transform-origin:0 0;">16</div>
<div class="t" style="left:1015.0px;top:530.4px;font-size:12px;color:#000;transform:scaleX(0.8982);transform-origin:0 0;">18</div>
<div class="t" style="left:1015.0px;top:542.8px;font-size:12px;color:#000;transform:scaleX(0.8982);transform-origin:0 0;">20</div>
<div class="a" style="left:1047px;top:464px;width:18px;height:93px;background:#f0f0f0;"></div>
<div class="a" style="left:1048px;top:488px;width:15px;height:25px;background:#cdcdcd;"></div>
<svg class="a" style="left:1051px;top:469px;" width="9" height="7" viewBox="0 0 9 7"><path d="M0.5 5.5 L4.5 1.5 L8.5 5.5" fill="none" stroke="#222" stroke-width="1.4"/></svg>
<svg class="a" style="left:1051px;top:544px;" width="9" height="7" viewBox="0 0 9 7"><path d="M0.5 1.5 L4.5 5.5 L8.5 1.5" fill="none" stroke="#222" stroke-width="1.4"/></svg>
<div class="a" style="left:1075px;top:444px;width:66px;height:21px;background:#e1e1e1;border:2px solid #0078d7;"></div>
<div class="t" style="left:1099.0px;top:448.8px;font-size:12px;transform:scaleX(0.9225);transform-origin:0 0;">OK</div>
<div class="a" style="left:1075px;top:470px;width:66px;height:21px;background:#e1e1e1;border:1px solid #adadad;"></div>
<div class="t" style="left:1090.0px;top:474.8px;font-size:12px;transform:scaleX(0.9636);transform-origin:0 0;">Cancel</div>
<div class="a" style="left:738px;top:582px;width:148px;height:109px;border:1px solid #dcdcdc;"></div>
<div class="a" style="left:745px;top:576px;width:38px;height:12px;background:#f0f0f0;"></div>
<div class="t" style="left:747.0px;top:575.5px;font-size:12px;transform:scaleX(0.9323);transform-origin:0 0;">Effects</div>
<div class="a" style="left:747px;top:597px;width:13px;height:13px;background:#fff;border:1px solid #333;"></div>
<div class="t" style="left:763.4px;top:597.8px;font-size:12px;transform:scaleX(0.8763);transform-origin:0 0;">Stri<u>k</u>eout</div>
<div class="a" style="left:747px;top:618px;width:13px;height:13px;background:#fff;border:1px solid #333;"></div>
<div class="t" style="left:763.4px;top:618.8px;font-size:12px;transform:scaleX(0.8662);transform-origin:0 0;"><u>U</u>nderline</div>
<div class="a" style="left:892px;top:582px;width:174px;height:62px;border:1px solid #dcdcdc;"></div>
<div class="a" style="left:899px;top:576px;width:40px;height:12px;background:#f0f0f0;"></div>
<div class="t" style="left:901.3px;top:575.5px;font-size:12px;transform:scaleX(0.8971);transform-origin:0 0;">Sample</div>
<div class="t" style="left:951.0px;top:610.5px;font-size:13px;font-family:'Liberation Mono',monospace;transform:scaleX(0.8971);transform-origin:0 0;">AaBbYyZz</div>
<div class="t" style="left:892.0px;top:657.3px;font-size:12px;transform:scaleX(0.8522);transform-origin:0 0;">Sc<u>r</u>ipt:</div>
<div class="a" style="left:892px;top:672px;width:174px;height:20px;background:#fff;border:1px solid #7a7a7a;"></div>
<div class="t" style="left:896.0px;top:676.3px;font-size:12px;transform:scaleX(0.8928);transform-origin:0 0;">Western</div>
<svg class="a" style="left:1053px;top:681px;" width="9" height="5" viewBox="0 0 9 5"><path d="M0.6 0.6 L4.5 4.3 L8.4 0.6" fill="none" stroke="#3a3a3a" stroke-width="1.2"/></svg>
<svg class="a" style="left:723px;top:432px;" width="9" height="10" viewBox="0 0 9 10"><path d="M0 0 L9 5 L0 10 Z" fill="#000"/></svg>
<div class="a" style="left:914px;top:754px;width:253px;height:26px;background:linear-gradient(#143468,#0f2c5e 60%,#0c2452);border-radius:5px;"></div>
<div class="t" style="left:922.0px;top:755.4px;font-size:20px;color:#fff;font-style:italic;-webkit-text-stroke:0.7px #fff;transform:scaleX(1.0420);transform-origin:0 0;">PurchaseOrderSystem<span style="font-size:16px">.net</span></div>
<div class="a" style="left:0px;top:0px;width:1169px;height:1px;background:#8a8a8a;"></div>
<div class="a" style="left:0px;top:0px;width:1px;height:782px;background:#808080;"></div>
<div class="a" style="left:1167px;top:0px;width:2px;height:782px;background:#7a7a7a;"></div>
</body></html>
